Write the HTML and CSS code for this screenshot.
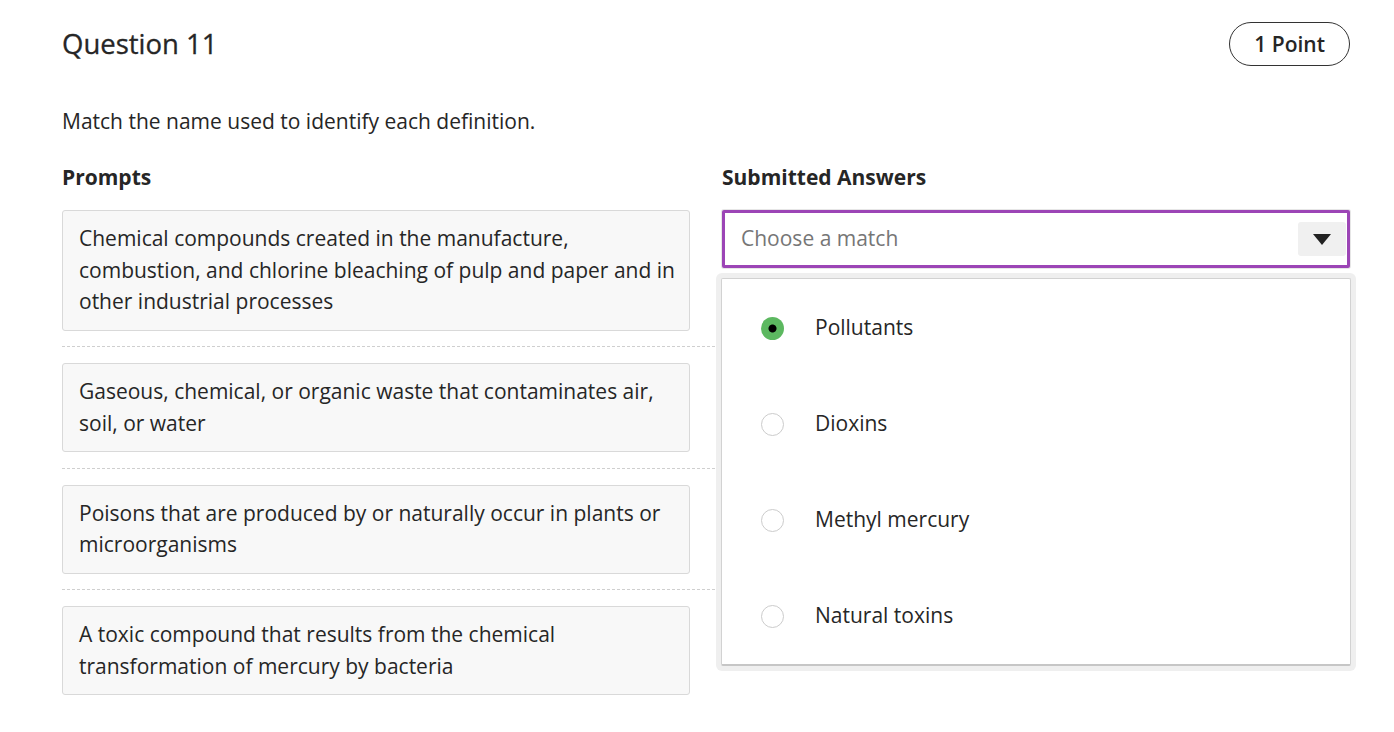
FILE: index.html
```html
<!DOCTYPE html>
<html lang="en">
<head>
    <meta charset="UTF-8">
    <meta name="viewport" content="width=device-width, initial-scale=1.0">
    <title>Question 11</title>
    <link rel="stylesheet" href="styles.css">
</head>
<body>
    <div class="question">
        <!-- Header -->
        <div class="question-header">
            <h1 class="question-title">Question 11</h1>
            <span class="points">1 Point</span>
        </div>
        <p class="question-text">Match the name used to identify each definition.</p>

        <!-- Column headings -->
        <div class="match-grid match-headings">
            <h2 class="col-title">Prompts</h2>
            <h2 class="col-title">Submitted Answers</h2>
        </div>

        <!-- Rows -->
        <div class="match-grid match-row">
            <div class="prompt">Chemical compounds created in the manufacture, combustion, and chlorine bleaching of pulp and paper and in other industrial processes</div>
            <div class="answer">
                <div class="select is-open">
                    <span class="placeholder">Choose a match</span>
                    <span class="select-arrow"></span>
                </div>
                <!-- Open dropdown -->
                <div class="dropdown">
                    <label class="option">
                        <span class="radio checked"></span>
                        <span>Pollutants</span>
                    </label>
                    <label class="option">
                        <span class="radio"></span>
                        <span>Dioxins</span>
                    </label>
                    <label class="option">
                        <span class="radio"></span>
                        <span>Methyl mercury</span>
                    </label>
                    <label class="option">
                        <span class="radio"></span>
                        <span>Natural toxins</span>
                    </label>
                </div>
            </div>
        </div>
        <div class="match-grid match-row">
            <div class="prompt">Gaseous, chemical, or organic waste that contaminates air, soil, or water</div>
            <div class="answer"></div>
        </div>
        <div class="match-grid match-row">
            <div class="prompt">Poisons that are produced by or naturally occur in plants or microorganisms</div>
            <div class="answer"></div>
        </div>
        <div class="match-grid match-row last">
            <div class="prompt">A toxic compound that results from the chemical transformation of mercury by bacteria</div>
            <div class="answer"></div>
        </div>
    </div>
</body>
</html>
```

FILE: styles.css
```css
body {
    margin: 0;
    background: #fff;
    color: #262626;
    font-family: "Open Sans", "Noto Sans", sans-serif;
    font-size: 21px;
    line-height: 1.5;
}

.question {
    padding: 22px 44px 0 62px;
}

/* Header */
.question-header {
    display: flex;
    justify-content: space-between;
    align-items: center;
    height: 44px;
}

.question-title {
    margin: 0;
    font-size: 27.5px;
    font-weight: 400;
    line-height: 1;
    -webkit-text-stroke: 0.3px #262626;
}

.points {
    box-sizing: border-box;
    height: 44px;
    padding: 0 24px;
    border: 1px solid #333;
    border-radius: 22px;
    font-size: 21px;
    font-weight: 600;
    line-height: 42px;
}

.question-text {
    margin: 40px 0 0;
}

/* Two column grid */
.match-grid {
    display: grid;
    grid-template-columns: 1fr 1fr;
    column-gap: 32px;
    align-items: start;
}

.match-headings {
    margin: 24px 0 1px;
}

.col-title {
    margin: 0;
    font-size: 21px;
    font-weight: 700;
    line-height: 1.5;
}

.match-row {
    padding: 16px 0 15.5px;
    border-bottom: 1px dashed #cfcfcf;
}

.match-row.last {
    border-bottom: none;
}

.prompt {
    padding: 12px 12px 12px 16px;
    background: #f8f8f8;
    border: 1px solid #d9d9d9;
    border-radius: 3px;
}

/* Select */
.answer {
    position: relative;
}

.select {
    display: flex;
    align-items: center;
    justify-content: space-between;
    box-sizing: border-box;
    height: 58px;
    padding: 0 1px 0 17px;
    border: 1px solid #cdcdcd;
    border-radius: 2px;
    background: #fff;
}

.select.is-open {
    border: 3px solid #9c45b6;
    padding-left: 16px;
    box-shadow: 0 0 0 1px #e6e6e6;
}

.placeholder {
    color: #767676;
}

.select-arrow {
    position: relative;
    width: 48px;
    height: 34px;
    border-radius: 3px;
    background: #f0f0f0;
}

.select-arrow::after {
    content: "";
    position: absolute;
    left: 15px;
    top: 12px;
    border-left: 9px solid transparent;
    border-right: 9px solid transparent;
    border-top: 11px solid #222;
}

/* Dropdown list */
.dropdown {
    position: absolute;
    top: calc(100% + 10px);
    left: -1px;
    right: -1px;
    z-index: 5;
    padding: 1px 0 0;
    background: #fff;
    border: 1px solid #d2d2d2;
    border-bottom: 2px solid #c6c6c6;
    border-radius: 2px;
    box-shadow: 0 0 0 5px #efefef;
}

.option {
    display: flex;
    align-items: center;
    gap: 31px;
    height: 96px;
    padding-left: 39px;
    cursor: pointer;
}

.radio {
    box-sizing: border-box;
    width: 23px;
    height: 23px;
    border: 1px solid #cccccc;
    border-radius: 50%;
    background: #fff;
}

.radio.checked {
    border: none;
    background: radial-gradient(circle, #000 0 3.5px, #5cb860 4.5px);
}
```
